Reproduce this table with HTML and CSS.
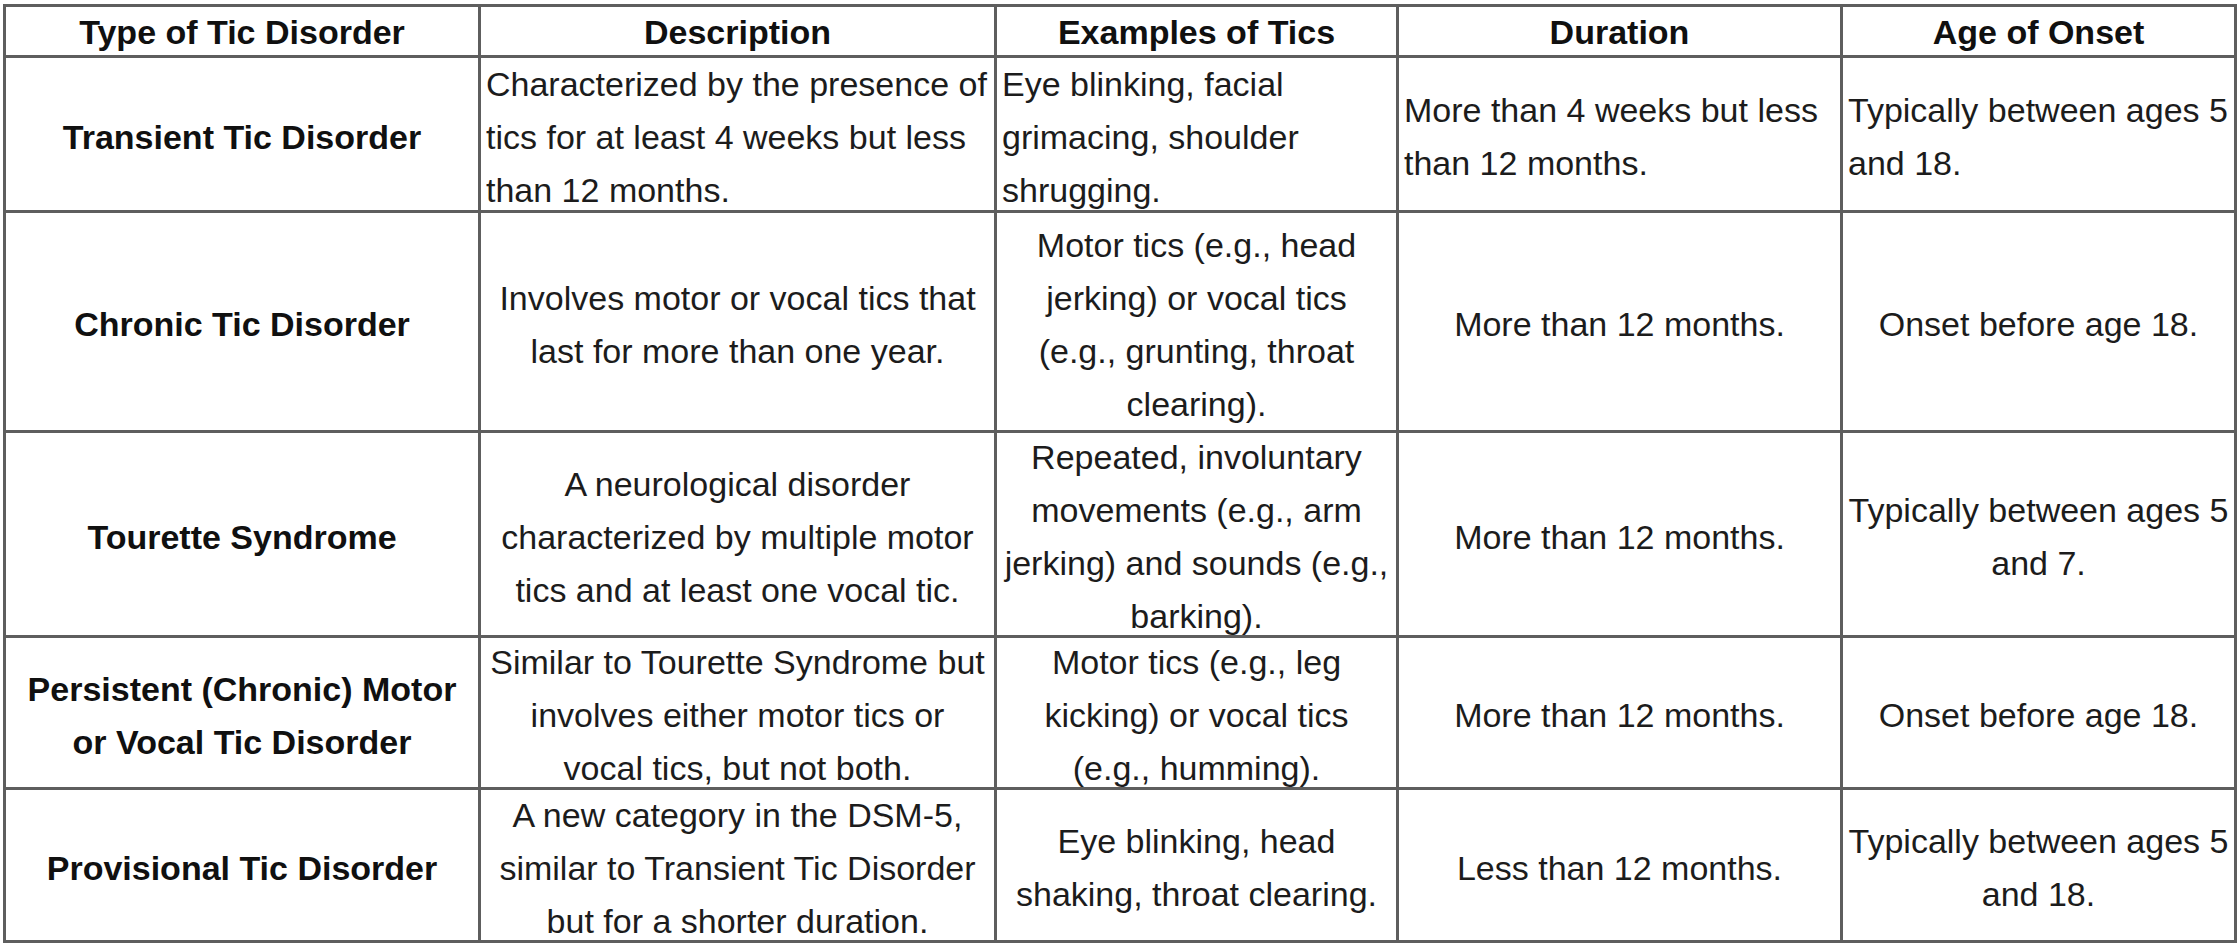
FILE: index.html
```html
<!DOCTYPE html>
<html lang="en">
<head>
<meta charset="utf-8">
<title>Tic Disorders</title>
<link rel="stylesheet" href="styles.css">
</head>
<body>
<div class="table">
  <div class="cell head">Type of Tic Disorder</div>
  <div class="cell head">Description</div>
  <div class="cell head">Examples of Tics</div>
  <div class="cell head">Duration</div>
  <div class="cell head">Age of Onset</div>

  <div class="cell name">Transient Tic Disorder</div>
  <div class="cell left"><p>Characterized by the presence of<br>tics for at least 4 weeks but less<br>than 12 months.</p></div>
  <div class="cell left"><p>Eye blinking, facial<br>grimacing, shoulder<br>shrugging.</p></div>
  <div class="cell left"><p>More than 4 weeks but less<br>than 12 months.</p></div>
  <div class="cell left"><p>Typically between ages 5<br>and 18.</p></div>

  <div class="cell name">Chronic Tic Disorder</div>
  <div class="cell"><p>Involves motor or vocal tics that<br>last for more than one year.</p></div>
  <div class="cell"><p>Motor tics (e.g., head<br>jerking) or vocal tics<br>(e.g., grunting, throat<br>clearing).</p></div>
  <div class="cell"><p>More than 12 months.</p></div>
  <div class="cell"><p>Onset before age 18.</p></div>

  <div class="cell name">Tourette Syndrome</div>
  <div class="cell"><p>A neurological disorder<br>characterized by multiple motor<br>tics and at least one vocal tic.</p></div>
  <div class="cell"><p>Repeated, involuntary<br>movements (e.g., arm<br>jerking) and sounds (e.g.,<br>barking).</p></div>
  <div class="cell"><p>More than 12 months.</p></div>
  <div class="cell"><p>Typically between ages 5<br>and 7.</p></div>

  <div class="cell name">Persistent (Chronic) Motor<br>or Vocal Tic Disorder</div>
  <div class="cell"><p>Similar to Tourette Syndrome but<br>involves either motor tics or<br>vocal tics, but not both.</p></div>
  <div class="cell"><p>Motor tics (e.g., leg<br>kicking) or vocal tics<br>(e.g., humming).</p></div>
  <div class="cell"><p>More than 12 months.</p></div>
  <div class="cell"><p>Onset before age 18.</p></div>

  <div class="cell name">Provisional Tic Disorder</div>
  <div class="cell"><p>A new category in the DSM-5,<br>similar to Transient Tic Disorder<br>but for a shorter duration.</p></div>
  <div class="cell"><p>Eye blinking, head<br>shaking, throat clearing.</p></div>
  <div class="cell"><p>Less than 12 months.</p></div>
  <div class="cell"><p>Typically between ages 5<br>and 18.</p></div>
</div>
</body>
</html>
```
FILE: styles.css
```css
html, body {
  margin: 0;
  padding: 0;
  background: #ffffff;
}
body {
  width: 2240px;
  height: 952px;
  overflow: hidden;
  font-family: "Liberation Sans", Arial, sans-serif;
  color: #1c1c1c;
}
.table {
  margin: 4px 0 0 3px;
  display: grid;
  grid-template-columns: 472px 513px 399px 441px 391px;
  grid-template-rows: 48px 152px 217px 202px 149px 150px;
  gap: 3px;
  padding: 3px;
  width: max-content;
  background: #5e5e5e;
}
.cell {
  background: #ffffff;
  display: flex;
  align-items: center;
  justify-content: center;
  text-align: center;
  font-size: 34px;
  line-height: 53px;
  white-space: nowrap;
  padding: 0 5px;
  min-height: 0;
  position: relative;
  z-index: 0;
}
.cell p {
  margin: 0;
  padding-top: 6px;
}
.head, .name {
  font-weight: bold;
  color: #101010;
}
.name {
  padding-top: 6px;
}
.head {
  padding-top: 2px;
}
.left {
  justify-content: flex-start;
  text-align: left;
}
```
